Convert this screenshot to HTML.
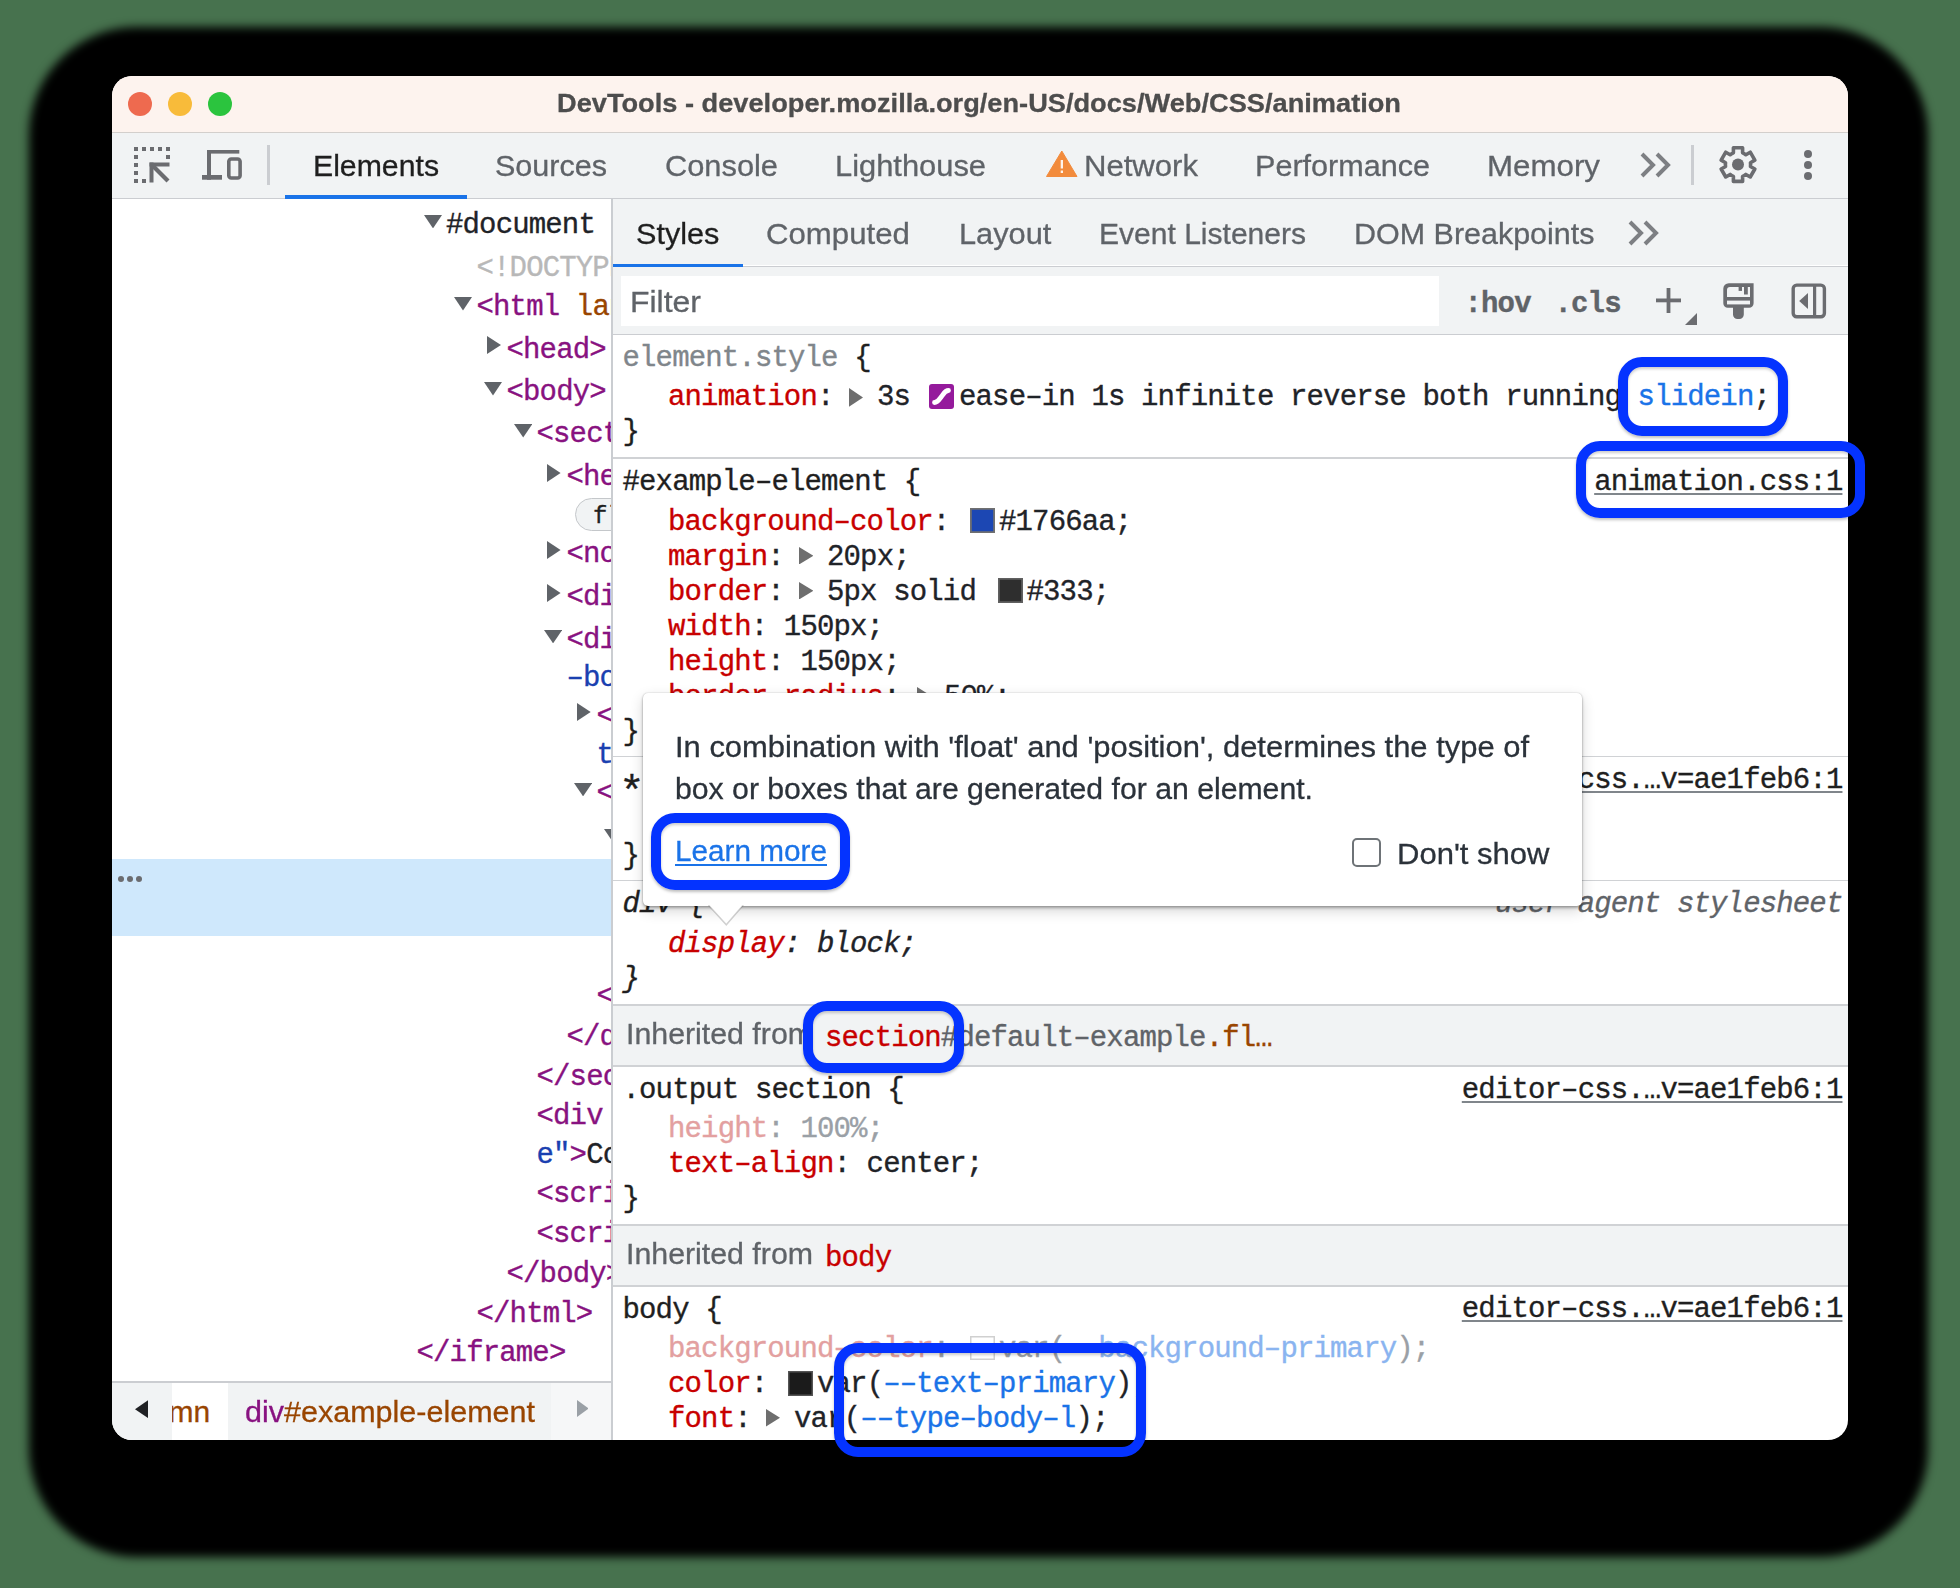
<!DOCTYPE html><html><head><meta charset="utf-8"><style>
html,body{margin:0;padding:0}
body{width:1960px;height:1588px;position:relative;overflow:hidden;background:#47724e}
.m{position:absolute;white-space:pre;font-family:'Liberation Mono',monospace;line-height:40px;-webkit-text-stroke:0.35px currentColor}
.s{position:absolute;white-space:pre;font-family:'Liberation Sans',sans-serif;line-height:40px;transform-origin:0 0;-webkit-text-stroke:0.3px currentColor}
.r{position:absolute;display:block}
.c{position:absolute;overflow:hidden}
</style></head><body>
<div class="r" style="left:28.5px;top:27px;width:1899.5px;height:1530px;background:#000;border-radius:108px;filter:blur(5px)"></div>
<div class="c" style="left:112px;top:76px;width:1736px;height:1364px;border-radius:20px;background:#fff">
<div class="r" style="left:0.00px;top:0.00px;width:1736.00px;height:56.00px;background:#fdf3ee;"></div>
<div class="r" style="left:0.00px;top:56.00px;width:1736.00px;height:1.00px;background:#d3cfcc;"></div>
<div class="r" style="left:16px;top:16px;width:24px;height:24px;border-radius:50%;background:#ee6a4f"></div>
<div class="r" style="left:56px;top:16px;width:24px;height:24px;border-radius:50%;background:#f8bb3a"></div>
<div class="r" style="left:96px;top:16px;width:24px;height:24px;border-radius:50%;background:#2bc43e"></div>
<div class="s" id="title" style="left:445.00px;top:7.00px;font-size:26px;color:#4d4d4d;font-weight:bold;transform:scaleX(1.0463);">DevTools - developer.mozilla.org/en-US/docs/Web/CSS/animation</div>
<div class="r" style="left:0.00px;top:57.00px;width:1736.00px;height:65.00px;background:#f1f3f4;"></div>
<div class="r" style="left:0.00px;top:122.00px;width:1736.00px;height:1.50px;background:#cbcdd1;"></div>
<div class="r" style="left:173.00px;top:119.00px;width:182.00px;height:4.00px;background:#1a73e8;"></div>
<svg class="r" style="left:18px;top:67px" width="44" height="44" viewBox="130 143 44 44">
<g fill="#6b6c70">
<rect x="134" y="147" width="4" height="4"/><rect x="142" y="147" width="4" height="4"/><rect x="150" y="147" width="4" height="4"/><rect x="158" y="147" width="4" height="4"/><rect x="166" y="147" width="4" height="4"/>
<rect x="134" y="155" width="4" height="4"/><rect x="166" y="155" width="4" height="4"/>
<rect x="134" y="163" width="4" height="4"/><rect x="134" y="171" width="4" height="4"/><rect x="134" y="179" width="4" height="4"/><rect x="142" y="179" width="4" height="4"/>
<rect x="149.5" y="162.5" width="4" height="20"/><rect x="149.5" y="162.5" width="20" height="4"/>
</g><path d="M152 165 L168 181" stroke="#6b6c70" stroke-width="4.2"/></svg>
<svg class="r" style="left:86px;top:69px" width="48" height="40" viewBox="198 145 48 40">
<g fill="#6b6c70"><rect x="207" y="150" width="32.3" height="3.6"/><rect x="207" y="150" width="4" height="29.7"/><rect x="202" y="175" width="20" height="4.7"/></g>
<rect x="228.8" y="159" width="11.3" height="19" rx="2.5" fill="none" stroke="#6b6c70" stroke-width="3.6"/></svg>
<div class="r" style="left:155.00px;top:69.00px;width:3.00px;height:40.00px;background:#cbcdd1;"></div>
<div class="s" id="t_el" style="left:200.50px;top:70.00px;font-size:30px;color:#1f1f1f;font-weight:normal;transform:scaleX(1.0075);">Elements</div>
<div class="s" id="t_so" style="left:382.50px;top:70.00px;font-size:30px;color:#5f6368;font-weight:normal;transform:scaleX(1.0176);">Sources</div>
<div class="s" id="t_co" style="left:552.50px;top:70.00px;font-size:30px;color:#5f6368;font-weight:normal;transform:scaleX(1.0265);">Console</div>
<div class="s" id="t_li" style="left:722.50px;top:70.00px;font-size:30px;color:#5f6368;font-weight:normal;transform:scaleX(1.0286);">Lighthouse</div>
<div class="s" id="t_ne" style="left:971.50px;top:70.00px;font-size:30px;color:#5f6368;font-weight:normal;transform:scaleX(1.0361);">Network</div>
<div class="s" id="t_pe" style="left:1142.50px;top:70.00px;font-size:30px;color:#5f6368;font-weight:normal;transform:scaleX(1.0189);">Performance</div>
<div class="s" id="t_me" style="left:1374.50px;top:70.00px;font-size:30px;color:#5f6368;font-weight:normal;transform:scaleX(1.0430);">Memory</div>
<svg class="r" style="left:932px;top:72px" width="36" height="32" viewBox="1044 148 36 32">
<path d="M1061.8 151 L1077 176.5 L1046.5 176.5 Z" fill="#f28b3c" stroke="#f28b3c" stroke-width="1" stroke-linejoin="round"/>
<rect x="1060.7" y="160" width="2.3" height="8.5" fill="#fff" opacity="0.9"/><rect x="1060.7" y="170.5" width="2.3" height="2.5" fill="#fff" opacity="0.9"/></svg>
<svg class="r" style="left:1518px;top:69px" width="50" height="40" viewBox="1630 145 50 40"><path d="M1642 154 L1653 165.0 L1642 176" fill="none" stroke="#7d7f83" stroke-width="4"/><path d="M1657 154 L1668 165.0 L1657 176" fill="none" stroke="#7d7f83" stroke-width="4"/></svg>
<div class="r" style="left:1579.00px;top:69.00px;width:2.50px;height:40.00px;background:#cbcdd1;"></div>
<svg class="r" style="left:1602px;top:65px" width="48" height="48" viewBox="1714 141 48 48"><path d="M1733.40 152.87 L1733.40 147.80 L1742.60 147.80 L1742.60 152.87 A12.6 12.6 0 0 1 1745.86 154.75 L1750.25 152.22 L1754.85 160.18 L1750.46 162.72 A12.6 12.6 0 0 1 1750.46 166.48 L1754.85 169.02 L1750.25 176.98 L1745.86 174.45 A12.6 12.6 0 0 1 1742.60 176.33 L1742.60 181.40 L1733.40 181.40 L1733.40 176.33 A12.6 12.6 0 0 1 1730.14 174.45 L1725.75 176.98 L1721.15 169.02 L1725.54 166.48 A12.6 12.6 0 0 1 1725.54 162.72 L1721.15 160.18 L1725.75 152.22 L1730.14 154.75 A12.6 12.6 0 0 1 1733.40 152.87 Z" fill="none" stroke="#6b6c70" stroke-width="3.6" stroke-linejoin="round"/><circle cx="1738" cy="164.6" r="6" fill="#6b6c70"/></svg>
<div class="r" style="left:1692px;top:73.6px;width:8px;height:8px;border-radius:50%;background:#6b6c70"></div>
<div class="r" style="left:1692px;top:85px;width:8px;height:8px;border-radius:50%;background:#6b6c70"></div>
<div class="r" style="left:1692px;top:96.30000000000001px;width:8px;height:8px;border-radius:50%;background:#6b6c70"></div>
<div class="c" style="left:0px;top:123px;width:499px;height:1182px;background:#fff">
<div class="r" style="left:0.00px;top:659.70px;width:499.00px;height:77.30px;background:#cfe8fc;"></div>
<div class="r" style="left:6px;top:677px;width:6px;height:6px;border-radius:50%;background:#6b6c70"></div>
<div class="r" style="left:15px;top:677px;width:6px;height:6px;border-radius:50%;background:#6b6c70"></div>
<div class="r" style="left:24px;top:677px;width:6px;height:6px;border-radius:50%;background:#6b6c70"></div>
<div class="m" style="left:334.00px;top:7.00px;font-size:29.0px;letter-spacing:-0.852px;"><span style="color:#1f2328;">#document</span></div>
<svg class="r" style="left:312.00px;top:16.00px" width="18.00" height="13.40" viewBox="0 0 10 10" preserveAspectRatio="none"><path d="M0 0L10 0L5 10Z" fill="#5f6368"/></svg>
<div class="m" style="left:364.50px;top:49.90px;font-size:29.0px;letter-spacing:-0.852px;"><span style="color:#b8b8b8;">&lt;!DOCTYPE html&gt;</span></div>
<div class="m" style="left:364.50px;top:89.40px;font-size:29.0px;letter-spacing:-0.852px;"><span style="color:#881280;">&lt;html</span><span style="color:#1f2328;"> </span><span style="color:#994500;">lang</span><span style="color:#881280;">=&quot;en&quot;&gt;</span></div>
<svg class="r" style="left:342.00px;top:98.40px" width="18.00" height="13.40" viewBox="0 0 10 10" preserveAspectRatio="none"><path d="M0 0L10 0L5 10Z" fill="#5f6368"/></svg>
<div class="m" style="left:394.50px;top:131.70px;font-size:29.0px;letter-spacing:-0.852px;"><span style="color:#881280;">&lt;head&gt;</span></div>
<svg class="r" style="left:375.00px;top:137.20px" width="14.00" height="18.00" viewBox="0 0 10 10" preserveAspectRatio="none"><path d="M0 0L10 5L0 10Z" fill="#5f6368"/></svg>
<div class="m" style="left:394.50px;top:174.20px;font-size:29.0px;letter-spacing:-0.852px;"><span style="color:#881280;">&lt;body&gt;</span></div>
<svg class="r" style="left:372.00px;top:183.20px" width="18.00" height="13.40" viewBox="0 0 10 10" preserveAspectRatio="none"><path d="M0 0L10 0L5 10Z" fill="#5f6368"/></svg>
<div class="m" style="left:424.50px;top:216.40px;font-size:29.0px;letter-spacing:-0.852px;"><span style="color:#881280;">&lt;section</span><span style="color:#994500;"> id</span></div>
<svg class="r" style="left:402.00px;top:225.40px" width="18.40" height="13.40" viewBox="0 0 10 10" preserveAspectRatio="none"><path d="M0 0L10 0L5 10Z" fill="#5f6368"/></svg>
<div class="m" style="left:454.50px;top:259.40px;font-size:29.0px;letter-spacing:-0.852px;"><span style="color:#881280;">&lt;header</span></div>
<svg class="r" style="left:435.00px;top:264.90px" width="13.60" height="18.00" viewBox="0 0 10 10" preserveAspectRatio="none"><path d="M0 0L10 5L0 10Z" fill="#5f6368"/></svg>
<div class="m" style="left:454.50px;top:336.40px;font-size:29.0px;letter-spacing:-0.852px;"><span style="color:#881280;">&lt;noscript&gt;</span></div>
<svg class="r" style="left:435.00px;top:341.90px" width="13.60" height="18.00" viewBox="0 0 10 10" preserveAspectRatio="none"><path d="M0 0L10 5L0 10Z" fill="#5f6368"/></svg>
<div class="m" style="left:454.50px;top:379.20px;font-size:29.0px;letter-spacing:-0.852px;"><span style="color:#881280;">&lt;div</span></div>
<svg class="r" style="left:435.00px;top:384.70px" width="13.60" height="18.00" viewBox="0 0 10 10" preserveAspectRatio="none"><path d="M0 0L10 5L0 10Z" fill="#5f6368"/></svg>
<div class="m" style="left:454.50px;top:421.90px;font-size:29.0px;letter-spacing:-0.852px;"><span style="color:#881280;">&lt;div</span></div>
<svg class="r" style="left:432.30px;top:430.90px" width="18.20" height="13.40" viewBox="0 0 10 10" preserveAspectRatio="none"><path d="M0 0L10 0L5 10Z" fill="#5f6368"/></svg>
<div class="m" style="left:454.50px;top:459.70px;font-size:29.0px;letter-spacing:-0.852px;"><span style="color:#1a40b0;">–box&quot;</span></div>
<div class="m" style="left:484.50px;top:498.20px;font-size:29.0px;letter-spacing:-0.852px;"><span style="color:#881280;">&lt;div</span></div>
<svg class="r" style="left:465.00px;top:503.70px" width="13.70" height="18.00" viewBox="0 0 10 10" preserveAspectRatio="none"><path d="M0 0L10 5L0 10Z" fill="#5f6368"/></svg>
<div class="m" style="left:484.50px;top:536.70px;font-size:29.0px;letter-spacing:-0.852px;"><span style="color:#1a40b0;">t&quot;</span></div>
<div class="m" style="left:484.50px;top:574.50px;font-size:29.0px;letter-spacing:-0.852px;"><span style="color:#881280;">&lt;div</span></div>
<svg class="r" style="left:462.00px;top:583.50px" width="18.20" height="13.40" viewBox="0 0 10 10" preserveAspectRatio="none"><path d="M0 0L10 0L5 10Z" fill="#5f6368"/></svg>
<div class="m" style="left:484.50px;top:777.60px;font-size:29.0px;letter-spacing:-0.852px;"><span style="color:#881280;">&lt;/div&gt;</span></div>
<div class="m" style="left:454.50px;top:819.00px;font-size:29.0px;letter-spacing:-0.852px;"><span style="color:#881280;">&lt;/div&gt;</span></div>
<div class="m" style="left:424.50px;top:858.70px;font-size:29.0px;letter-spacing:-0.852px;"><span style="color:#881280;">&lt;/section&gt;</span></div>
<div class="m" style="left:424.50px;top:898.40px;font-size:29.0px;letter-spacing:-0.852px;"><span style="color:#881280;">&lt;div</span><span style="color:#994500;"> class</span></div>
<div class="m" style="left:424.50px;top:936.60px;font-size:29.0px;letter-spacing:-0.852px;"><span style="color:#1a40b0;">e&quot;</span><span style="color:#881280;">&gt;</span><span style="color:#1f2328;">Code</span></div>
<div class="m" style="left:424.50px;top:976.40px;font-size:29.0px;letter-spacing:-0.852px;"><span style="color:#881280;">&lt;script&gt;</span></div>
<div class="m" style="left:424.50px;top:1016.00px;font-size:29.0px;letter-spacing:-0.852px;"><span style="color:#881280;">&lt;script&gt;</span></div>
<div class="m" style="left:394.50px;top:1055.90px;font-size:29.0px;letter-spacing:-0.852px;"><span style="color:#881280;">&lt;/body&gt;</span></div>
<div class="m" style="left:364.50px;top:1095.60px;font-size:29.0px;letter-spacing:-0.852px;"><span style="color:#881280;">&lt;/html&gt;</span></div>
<div class="m" style="left:304.50px;top:1135.40px;font-size:29.0px;letter-spacing:-0.852px;"><span style="color:#881280;">&lt;/iframe&gt;</span></div>
<svg class="r" style="left:492.00px;top:630.20px" width="18.00" height="13.30" viewBox="0 0 10 10" preserveAspectRatio="none"><path d="M0 0L10 0L5 10Z" fill="#5f6368"/></svg>
<div class="r" style="left:463.4px;top:299.4px;width:80px;height:31px;border-radius:17px;background:#f1f3f4;border:1.5px solid #c4c7ca"></div>
<div class="m" style="left:481.00px;top:297.50px;font-size:24px;"><span style="color:#1f1f1f;">flex</span></div>
</div>
<div class="r" style="left:0.00px;top:1305.00px;width:499.00px;height:1.50px;background:#cbcdd1;"></div>
<div class="r" style="left:0.00px;top:1306.50px;width:499.00px;height:57.50px;background:#f1f3f4;"></div>
<div class="r" style="left:59.80px;top:1306.50px;width:56.20px;height:57.50px;background:#ffffff;"></div>
<div class="r" style="left:439.00px;top:1306.50px;width:60.00px;height:57.50px;background:#f6f7f8;"></div>
<svg class="r" style="left:23.00px;top:1324.20px" width="13.40" height="18.30" viewBox="0 0 10 10" preserveAspectRatio="none"><path d="M10 0L0 5L10 10Z" fill="#202124"/></svg>
<svg class="r" style="left:464.70px;top:1324.00px" width="11.60" height="17.00" viewBox="0 0 10 10" preserveAspectRatio="none"><path d="M0 0L10 5L0 10Z" fill="#9aa0a6"/></svg>
<div class="c" style="left:59.80000000000001px;top:1306.5px;width:56px;height:57px">
<div class="s" style="left:-20.00px;top:9.20px;font-size:30px;color:#994500;font-weight:normal;">umn</div>
</div>
<div class="s" id="bc_div" style="left:133px;top:1315.7px;font-size:30px;color:#994500;transform:scaleX(1.0170)"><span style="color:#881280">div</span>#example-element</div>
<div class="r" style="left:499.00px;top:123.00px;width:2.00px;height:1241.00px;background:#cacdd1;"></div>
<div class="r" style="left:501.00px;top:123.00px;width:1235.00px;height:66.00px;background:#f1f3f4;"></div>
<div class="r" style="left:501.00px;top:190.00px;width:1235.00px;height:1.50px;background:#cbcdd1;"></div>
<div class="r" style="left:501.00px;top:187.50px;width:130.00px;height:4.00px;background:#1a73e8;"></div>
<div class="s" id="s_st" style="left:524.10px;top:137.70px;font-size:30px;color:#1f1f1f;font-weight:normal;transform:scaleX(1.0208);">Styles</div>
<div class="s" id="s_co" style="left:654.20px;top:137.70px;font-size:30px;color:#5f6368;font-weight:normal;transform:scaleX(1.0389);">Computed</div>
<div class="s" id="s_la" style="left:846.90px;top:137.70px;font-size:30px;color:#5f6368;font-weight:normal;transform:scaleX(1.0258);">Layout</div>
<div class="s" id="s_ev" style="left:986.50px;top:137.70px;font-size:30px;color:#5f6368;font-weight:normal;transform:scaleX(1.0011);">Event Listeners</div>
<div class="s" id="s_do" style="left:1241.50px;top:137.70px;font-size:30px;color:#5f6368;font-weight:normal;transform:scaleX(1.0158);">DOM Breakpoints</div>
<svg class="r" style="left:1508px;top:136px" width="50" height="40" viewBox="1620 212 50 40"><path d="M1630 222 L1641 233.0 L1630 244" fill="none" stroke="#7d7f83" stroke-width="4"/><path d="M1645 222 L1656 233.0 L1645 244" fill="none" stroke="#7d7f83" stroke-width="4"/></svg>
<div class="r" style="left:501.00px;top:190.50px;width:1235.00px;height:67.00px;background:#f1f3f4;"></div>
<div class="r" style="left:509.00px;top:200.00px;width:818.00px;height:50.00px;background:#ffffff;"></div>
<div class="r" style="left:501.00px;top:257.50px;width:1235.00px;height:1.50px;background:#cbcdd1;"></div>
<div class="s" id="filter" style="left:518.00px;top:206.00px;font-size:30px;color:#5f6368;font-weight:normal;transform:scaleX(1.0649);">Filter</div>
<div class="m" style="left:1352.50px;top:209.00px;font-size:29.0px;letter-spacing:-0.852px;"><span style="color:#5f6368;font-weight:bold">:hov</span></div>
<div class="m" style="left:1442.50px;top:209.00px;font-size:29.0px;letter-spacing:-0.852px;"><span style="color:#5f6368;font-weight:bold">.cls</span></div>
<svg class="r" style="left:1538px;top:204px" width="200" height="50" viewBox="1650 280 200 50">
<rect x="1656" y="298.5" width="25" height="3.8" fill="#6b6c70"/><rect x="1666.6" y="288" width="3.8" height="25" fill="#6b6c70"/>
<path d="M1697 313 L1697 325 L1685 325 Z" fill="#6b6c70"/>
<path d="M1728.8 283.2 H1753.6 V303.2 a4.5 4.5 0 0 1 -4.5 4.5 H1743.8 V314.5 a4.5 4.5 0 0 1 -4.5 4.5 h-1.8 a4.5 4.5 0 0 1 -4.5 -4.5 V307.7 H1727.8 a4.5 4.5 0 0 1 -4.5 -4.5 V288.7 a5.5 5.5 0 0 1 5.5 -5.5 Z" fill="#6b6c70"/>
<path d="M1730 286.9 H1750 V297 H1727 V289.9 a3 3 0 0 1 3 -3 Z" fill="#f1f3f4"/><rect x="1727" y="300.6" width="23" height="3.8" fill="#f1f3f4"/>
<rect x="1738.6" y="286.5" width="3.4" height="4.4" fill="#6b6c70"/><rect x="1744" y="286.5" width="3.8" height="8" fill="#6b6c70"/>
<rect x="1793.2" y="285.1" width="31.2" height="31.6" rx="3.5" fill="none" stroke="#6b6c70" stroke-width="3.4"/>
<rect x="1813" y="285" width="3.2" height="32" fill="#6b6c70"/>
<path d="M1808 293 L1808 309 L1799.2 301 Z" fill="#6b6c70"/>
</svg>
<div class="m" style="left:510.50px;top:262.90px;font-size:29.0px;letter-spacing:-0.852px;"><span style="color:#80868b;">element.style</span><span style="color:#1f1f1f;"> {</span></div>
<div class="m" style="left:556.00px;top:302.40px;font-size:29.0px;letter-spacing:-0.852px;"><span style="color:#c80000;">animation</span><span style="color:#1f2328;">: </span></div>
<svg class="r" style="left:737.00px;top:312.00px" width="14.00" height="18.80" viewBox="0 0 10 10" preserveAspectRatio="none"><path d="M0 0L10 5L0 10Z" fill="#6e6e6e"/></svg>
<div class="m" style="left:765.00px;top:302.40px;font-size:29.0px;letter-spacing:-0.852px;"><span style="color:#1f2328;">3s</span></div>
<svg class="r" style="left:817px;top:308px" width="25" height="25" viewBox="0 0 25 25"><rect width="25" height="25" rx="3" fill="#951a9c"/><path d="M5.5 18.5 C9 18.5 10.5 15 12.5 12.5 S16 6.5 19.5 6.5" stroke="#fff" stroke-width="4.8" fill="none" stroke-linecap="round"/></svg>
<div class="m" style="left:847.00px;top:302.40px;font-size:29.0px;letter-spacing:-0.852px;"><span style="color:#1f2328;">ease–in 1s infinite reverse both running </span><span style="color:#1a73e8;">slidein</span><span style="color:#1f2328;">;</span></div>
<div class="m" style="left:510.50px;top:337.40px;font-size:29.0px;letter-spacing:-0.852px;"><span style="color:#1f1f1f;">}</span></div>
<div class="r" style="left:501.00px;top:381.00px;width:1235.00px;height:1.50px;background:#d0d2d5;"></div>
<div class="m" style="left:510.50px;top:387.00px;font-size:29.0px;letter-spacing:-0.852px;"><span style="color:#1f1f1f;">#example–element {</span></div>
<div class="m" style="left:1482.18px;top:386.60px;font-size:29.0px;letter-spacing:-0.852px;"><span style="color:#1f1f1f;text-decoration:underline;text-decoration-color:#80868b;text-underline-offset:3px">animation.css:1</span></div>
<div class="m" style="left:556.00px;top:426.50px;font-size:29.0px;letter-spacing:-0.852px;"><span style="color:#c80000;">background–color</span><span style="color:#1f2328;">: </span></div>
<div class="r" style="left:858.00px;top:432.00px;width:25.00px;height:25.00px;background:#1c47b3;box-shadow:inset 0 0 0 1.8px #707070;"></div>
<div class="m" style="left:887.00px;top:426.50px;font-size:29.0px;letter-spacing:-0.852px;"><span style="color:#1f2328;">#1766aa;</span></div>
<div class="m" style="left:556.00px;top:461.50px;font-size:29.0px;letter-spacing:-0.852px;"><span style="color:#c80000;">margin</span><span style="color:#1f2328;">: </span></div>
<svg class="r" style="left:686.80px;top:470.50px" width="14.40" height="17.50" viewBox="0 0 10 10" preserveAspectRatio="none"><path d="M0 0L10 5L0 10Z" fill="#6e6e6e"/></svg>
<div class="m" style="left:715.00px;top:461.50px;font-size:29.0px;letter-spacing:-0.852px;"><span style="color:#1f2328;">20px;</span></div>
<div class="m" style="left:556.00px;top:496.50px;font-size:29.0px;letter-spacing:-0.852px;"><span style="color:#c80000;">border</span><span style="color:#1f2328;">: </span></div>
<svg class="r" style="left:686.80px;top:505.50px" width="14.40" height="17.50" viewBox="0 0 10 10" preserveAspectRatio="none"><path d="M0 0L10 5L0 10Z" fill="#6e6e6e"/></svg>
<div class="m" style="left:715.00px;top:496.50px;font-size:29.0px;letter-spacing:-0.852px;"><span style="color:#1f2328;">5px solid </span></div>
<div class="r" style="left:886.00px;top:502.00px;width:25.00px;height:25.00px;background:#2e2e2e;box-shadow:inset 0 0 0 1.8px #606060;"></div>
<div class="m" style="left:914.50px;top:496.50px;font-size:29.0px;letter-spacing:-0.852px;"><span style="color:#1f2328;">#333;</span></div>
<div class="m" style="left:556.00px;top:531.50px;font-size:29.0px;letter-spacing:-0.852px;"><span style="color:#c80000;">width</span><span style="color:#1f2328;">: 150px;</span></div>
<div class="m" style="left:556.00px;top:566.50px;font-size:29.0px;letter-spacing:-0.852px;"><span style="color:#c80000;">height</span><span style="color:#1f2328;">: 150px;</span></div>
<div class="m" style="left:556.00px;top:601.50px;font-size:29.0px;letter-spacing:-0.852px;"><span style="color:#c80000;">border–radius</span><span style="color:#1f2328;">: </span></div>
<svg class="r" style="left:805.00px;top:610.50px" width="14.00" height="17.50" viewBox="0 0 10 10" preserveAspectRatio="none"><path d="M0 0L10 5L0 10Z" fill="#6e6e6e"/></svg>
<div class="m" style="left:832.00px;top:601.50px;font-size:29.0px;letter-spacing:-0.852px;"><span style="color:#1f2328;">50%;</span></div>
<div class="m" style="left:510.50px;top:636.50px;font-size:29.0px;letter-spacing:-0.852px;"><span style="color:#1f1f1f;">}</span></div>
<div class="r" style="left:501.00px;top:679.50px;width:1235.00px;height:1.50px;background:#d0d2d5;"></div>
<div class="m" style="left:510.50px;top:686.00px;font-size:29.0px;letter-spacing:-0.852px;"><span style="color:#1f1f1f;">  {</span></div>
<div class="m" style="left:507.00px;top:697.80px;font-size:42.8px;"><span style="color:#1f1f1f;">*</span></div>
<div class="m" style="left:1349.80px;top:685.40px;font-size:29.0px;letter-spacing:-0.852px;"><span style="color:#1f1f1f;text-decoration:underline;text-decoration-color:#80868b;text-underline-offset:3px">editor–css.…v=ae1feb6:1</span></div>
<div class="m" style="left:556.00px;top:721.00px;font-size:29.0px;letter-spacing:-0.852px;"><span style="color:#c80000;">box–sizing</span><span style="color:#1f2328;">: border–box;</span></div>
<div class="m" style="left:510.50px;top:760.50px;font-size:29.0px;letter-spacing:-0.852px;"><span style="color:#1f1f1f;">}</span></div>
<div class="r" style="left:501.00px;top:803.50px;width:1235.00px;height:1.50px;background:#d0d2d5;"></div>
<div class="m" style="left:510.50px;top:809.00px;font-size:29.0px;letter-spacing:-0.852px;font-style:italic;"><span style="color:#1f1f1f;">div {</span></div>
<div class="m" style="left:1382.89px;top:809.30px;font-size:29.0px;letter-spacing:-0.852px;font-style:italic;"><span style="color:#5f6368;">user agent stylesheet</span></div>
<div class="m" style="left:556.00px;top:848.50px;font-size:29.0px;letter-spacing:-0.852px;font-style:italic;"><span style="color:#c80000;">display</span><span style="color:#1f2328;">: block;</span></div>
<div class="m" style="left:510.50px;top:883.50px;font-size:29.0px;letter-spacing:-0.852px;font-style:italic;"><span style="color:#1f1f1f;">}</span></div>
<div class="r" style="left:501.00px;top:928.00px;width:1235.00px;height:1.50px;background:#d0d2d5;"></div>
<div class="r" style="left:501.00px;top:929.50px;width:1235.00px;height:59.50px;background:#f1f3f4;"></div>
<div class="r" style="left:501.00px;top:989.00px;width:1235.00px;height:1.50px;background:#d0d2d5;"></div>
<div class="s" id="inh1" style="left:514.00px;top:938.40px;font-size:30px;color:#5f6368;font-weight:normal;transform:scaleX(1.0103);">Inherited from</div>
<div class="m" style="left:713.00px;top:943.00px;font-size:29.0px;letter-spacing:-0.852px;"><span style="color:#c80000;">section</span><span style="color:#5f6368;">#default–example</span><span style="color:#994500;">.fl…</span></div>
<div class="m" style="left:510.50px;top:994.50px;font-size:29.0px;letter-spacing:-0.852px;"><span style="color:#1f1f1f;">.output section {</span></div>
<div class="m" style="left:1349.80px;top:995.10px;font-size:29.0px;letter-spacing:-0.852px;"><span style="color:#1f1f1f;text-decoration:underline;text-decoration-color:#80868b;text-underline-offset:3px">editor–css.…v=ae1feb6:1</span></div>
<div class="m" style="left:556.00px;top:1034.00px;font-size:29.0px;letter-spacing:-0.852px;"><span style="color:#e3a0a0;">height</span><span style="color:#9aa0a6;">: </span><span style="color:#9aa0a6;">100%;</span></div>
<div class="m" style="left:556.00px;top:1069.00px;font-size:29.0px;letter-spacing:-0.852px;"><span style="color:#c80000;">text–align</span><span style="color:#1f2328;">: center;</span></div>
<div class="m" style="left:510.50px;top:1104.00px;font-size:29.0px;letter-spacing:-0.852px;"><span style="color:#1f1f1f;">}</span></div>
<div class="r" style="left:501.00px;top:1148.00px;width:1235.00px;height:1.50px;background:#d0d2d5;"></div>
<div class="r" style="left:501.00px;top:1149.50px;width:1235.00px;height:59.50px;background:#f1f3f4;"></div>
<div class="r" style="left:501.00px;top:1209.00px;width:1235.00px;height:1.50px;background:#d0d2d5;"></div>
<div class="s" id="inh2" style="left:514.00px;top:1158.00px;font-size:30px;color:#5f6368;font-weight:normal;transform:scaleX(1.0103);">Inherited from</div>
<div class="m" style="left:713.00px;top:1163.00px;font-size:29.0px;letter-spacing:-0.852px;"><span style="color:#c80000;">body</span></div>
<div class="m" style="left:510.50px;top:1214.50px;font-size:29.0px;letter-spacing:-0.852px;"><span style="color:#1f1f1f;">body {</span></div>
<div class="m" style="left:1349.80px;top:1214.10px;font-size:29.0px;letter-spacing:-0.852px;"><span style="color:#1f1f1f;text-decoration:underline;text-decoration-color:#80868b;text-underline-offset:3px">editor–css.…v=ae1feb6:1</span></div>
<div class="m" style="left:556.00px;top:1254.00px;font-size:29.0px;letter-spacing:-0.852px;"><span style="color:#e3a0a0;">background–color</span><span style="color:#9aa0a6;">: </span></div>
<div class="r" style="left:858.30px;top:1260.00px;width:24.70px;height:24.00px;background:#ffffff;box-shadow:inset 0 0 0 1.5px #d0d0d0;"></div>
<div class="m" style="left:887.00px;top:1254.00px;font-size:29.0px;letter-spacing:-0.852px;"><span style="color:#9aa0a6;">var(</span><span style="color:#8ab4f0;">––background–primary</span><span style="color:#9aa0a6;">);</span></div>
<div class="m" style="left:556.00px;top:1289.00px;font-size:29.0px;letter-spacing:-0.852px;"><span style="color:#c80000;">color</span><span style="color:#1f2328;">: </span></div>
<div class="r" style="left:676.20px;top:1295.00px;width:24.80px;height:24.50px;background:#1b1b1b;box-shadow:inset 0 0 0 1.5px #555;"></div>
<div class="m" style="left:705.00px;top:1289.00px;font-size:29.0px;letter-spacing:-0.852px;"><span style="color:#1f2328;">var(</span><span style="color:#1a73e8;">––text–primary</span><span style="color:#1f2328;">);</span></div>
<div class="m" style="left:556.00px;top:1324.00px;font-size:29.0px;letter-spacing:-0.852px;"><span style="color:#c80000;">font</span><span style="color:#1f2328;">: </span></div>
<svg class="r" style="left:654.00px;top:1333.00px" width="14.00" height="17.50" viewBox="0 0 10 10" preserveAspectRatio="none"><path d="M0 0L10 5L0 10Z" fill="#6e6e6e"/></svg>
<div class="m" style="left:682.00px;top:1324.00px;font-size:29.0px;letter-spacing:-0.852px;"><span style="color:#1f2328;">var(</span><span style="color:#1a73e8;">––type–body–l</span><span style="color:#1f2328;">);</span></div>
<div class="r" style="left:531px;top:616.5px;width:939px;height:213.5px;background:#fff;border-radius:5px;box-shadow:0 2px 3px rgba(0,0,0,0.30),0 5px 14px rgba(0,0,0,0.16),0 0 1.5px rgba(0,0,0,0.25)"></div>
<svg class="r" style="left:588px;top:824px" width="52" height="30" viewBox="700 900 52 30"><path d="M708.4 905 L726.3 924.8 L743.3 905" fill="#fff" stroke="rgba(0,0,0,0.18)" stroke-width="1.5"/><rect x="706" y="900" width="40" height="5.2" fill="#fff"/></svg>
<div class="s" id="tt1" style="left:563.00px;top:650.70px;font-size:30px;color:#2b323a;font-weight:normal;transform:scaleX(1.0309);">In combination with &#x27;float&#x27; and &#x27;position&#x27;, determines the type of</div>
<div class="s" id="tt2" style="left:563.00px;top:692.70px;font-size:30px;color:#2b323a;font-weight:normal;transform:scaleX(1.0067);">box or boxes that are generated for an element.</div>
<div class="s" id="tt3" style="left:563.00px;top:755.10px;font-size:30px;color:#1a73e8;font-weight:normal;transform:scaleX(0.9907);text-decoration:underline;text-underline-offset:3px;text-decoration-thickness:2px;">Learn more</div>
<div class="r" style="left:1239.5px;top:761.6px;width:25.5px;height:25.5px;border:2px solid #6e7377;border-radius:5px;background:#fff"></div>
<div class="s" id="tt4" style="left:1285.00px;top:757.50px;font-size:30px;color:#2b323a;font-weight:normal;transform:scaleX(1.0341);">Don&#x27;t show</div>
</div>
<div class="r" style="left:1618px;top:357px;width:150px;height:59px;border:10px solid #0433ff;border-radius:24px;box-shadow:0 2px 3px rgba(0,0,0,0.25),inset 0 2px 3px rgba(0,0,0,0.2)"></div>
<div class="r" style="left:1576px;top:440.6px;width:269px;height:57.60000000000002px;border:10px solid #0433ff;border-radius:24px;box-shadow:0 2px 3px rgba(0,0,0,0.25),inset 0 2px 3px rgba(0,0,0,0.2)"></div>
<div class="r" style="left:651px;top:813px;width:179px;height:57px;border:10px solid #0433ff;border-radius:24px;box-shadow:0 2px 3px rgba(0,0,0,0.25),inset 0 2px 3px rgba(0,0,0,0.2)"></div>
<div class="r" style="left:802.6px;top:1000.5px;width:141.39999999999998px;height:52.5px;border:10px solid #0433ff;border-radius:24px;box-shadow:0 2px 3px rgba(0,0,0,0.25),inset 0 2px 3px rgba(0,0,0,0.2)"></div>
<div class="r" style="left:833.5px;top:1343px;width:292.29999999999995px;height:93.59999999999991px;border:10px solid #0433ff;border-radius:24px;box-shadow:0 2px 3px rgba(0,0,0,0.25),inset 0 2px 3px rgba(0,0,0,0.2)"></div>
</body></html>
